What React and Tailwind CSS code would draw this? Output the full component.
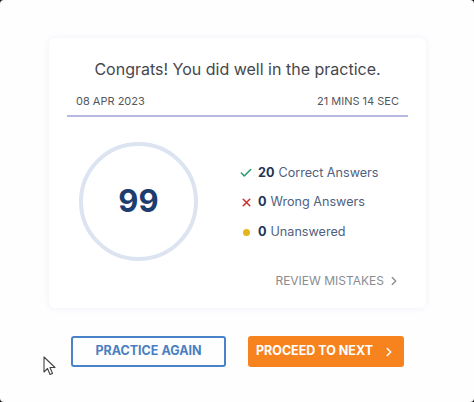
import { Check, X, ChevronRight } from "lucide-react";

const font = { fontFamily: "Inter, 'Noto Sans', sans-serif" };

function StatRow({ icon, count, label }) {
  return (
    <div className="flex h-[29.5px] items-center">
      <span className="flex w-[20px] items-center justify-center">{icon}</span>
      <span className="ml-[2px] text-[12.6px] font-bold text-[#1f3556]">{count}</span>
      <span className="ml-[4px] text-[12.6px] text-[#4f6180]">{label}</span>
    </div>
  );
}

function Cursor() {
  return (
    <svg className="absolute left-[43px] top-[356px]" width="13" height="20" viewBox="0 0 13 20">
      <path d="M1 1 L1 16 L4.5 12.5 L7 18.5 L9.5 17.5 L7 11.5 L12 11.5 Z" fill="#fff" stroke="#444" strokeWidth="1.1" strokeLinejoin="round" />
    </svg>
  );
}

export default function App() {
  return (
    <div className="h-[402px] w-[474px] bg-[#1a1a1a]" style={font}>
      <div className="relative h-full w-full rounded-[4px] bg-[#fefeff] pt-[38px]">
        <div className="ml-[49px] flex h-[270px] w-[377px] flex-col rounded-[6px] bg-white pt-[19px] shadow-[0_0_6px_rgba(120,130,200,0.12)]">
          <h1 className="text-center text-[16px] leading-[24px] text-[#45474d]">Congrats! You did well in the practice.</h1>
          <div className="mx-[18px] mt-[12px] flex justify-between border-b-2 border-[#b7b8e2] px-[9px] pb-[6px] text-[11px] leading-[16px] text-[#55575c]">
            <span>08 APR 2023</span>
            <span>21 MINS 14 SEC</span>
          </div>
          <div className="mt-[25px] flex items-center pl-[30px]">
            <div className="flex h-[119px] w-[119px] items-center justify-center rounded-full border-[4px] border-[#dce4f1]">
              <span className="text-[31px] font-bold text-[#1d3d6f]">99</span>
            </div>
            <div className="ml-[38px] mt-[2px] flex flex-col">
              <StatRow icon={<Check size={14} strokeWidth={2.6} color="#1f9e6a" />} count="20" label="Correct Answers" />
              <StatRow icon={<X size={13} strokeWidth={2.8} color="#d2322d" />} count="0" label="Wrong Answers" />
              <StatRow icon={<span className="h-[7px] w-[7px] rounded-full bg-[#e6b41f]" />} count="0" label="Unanswered" />
            </div>
          </div>
          <div className="mr-[25px] mt-[11px] flex items-center justify-end text-[12px] text-[#8a8c90]">
            <span>REVIEW MISTAKES</span>
            <ChevronRight size={14} strokeWidth={2.2} className="ml-[3px]" />
          </div>
        </div>
        <div className="mt-[28px] flex gap-[22px] pl-[71px]">
          <button className="flex h-[31px] w-[155px] items-center justify-center rounded-[3px] border-2 border-[#4a82c9] text-[12.5px] font-bold text-[#4a7fc1]">
            PRACTICE AGAIN
          </button>
          <button className="flex h-[31px] w-[156px] items-center justify-center rounded-[3px] bg-[#f7831e] text-[12.5px] font-bold text-white">
            PROCEED TO NEXT
            <ChevronRight size={14} strokeWidth={2.6} className="ml-[9px]" />
          </button>
        </div>
        <Cursor />
      </div>
    </div>
  );
}
